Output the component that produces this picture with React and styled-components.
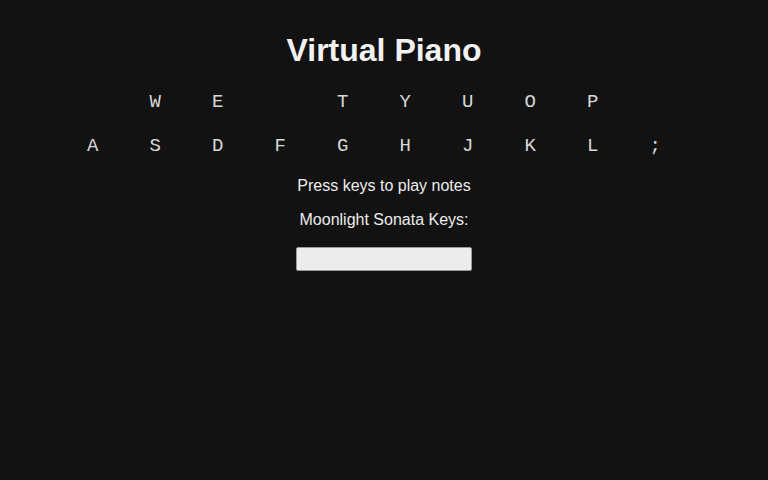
import React from "react";
import styled, { createGlobalStyle } from "styled-components";

const Global = createGlobalStyle`
  html, body {
    margin: 0;
    padding: 0;
    background: #121212;
  }
  body {
    font-family: "Liberation Sans", Arial, sans-serif;
    color: #f0f0f0;
  }
`;

const Page = styled.main`
  display: flex;
  flex-direction: column;
  align-items: center;
  padding-top: 32px;
`;

const Title = styled.h1`
  margin: 0;
  font-size: 32px;
  line-height: 37px;
  font-weight: 700;
  color: #f2f2f2;
`;

const Keyboard = styled.div`
  display: flex;
  flex-direction: column;
  margin-top: 11px;
  padding-right: 20px;
`;

const KeyRow = styled.div`
  display: flex;
  height: 44px;
  align-items: center;
`;

const Key = styled.span`
  width: 62.5px;
  text-align: center;
  font-family: "Liberation Mono", "Courier New", monospace;
  font-size: 19px;
  line-height: 44px;
  color: #d8d8d8;
  visibility: ${(p) => (p.$blank ? "hidden" : "visible")};
`;

const Note = styled.p`
  margin: ${(p) => p.$top}px 0 0;
  font-size: 16px;
  line-height: 18px;
  color: #ececec;
`;

const SequenceField = styled.input`
  margin-top: 18px;
  box-sizing: border-box;
  width: 176px;
  height: 24px;
  border: 1px solid #9a9a9a;
  border-radius: 2px;
  background: #ececec;
  padding: 2px 6px;
  font-family: "Liberation Sans", Arial, sans-serif;
  font-size: 13px;
  outline: none;
`;

// black keys; empty slots sit where no sharp exists
const topRow = ["", "W", "E", "", "T", "Y", "U", "O", "P", ""];
const bottomRow = ["A", "S", "D", "F", "G", "H", "J", "K", "L", ";"];

export default function App() {
  return (
    <>
      <Global />
      <Page>
        <Title>Virtual Piano</Title>
        <Keyboard>
          <KeyRow>
            {topRow.map((k, i) => (
              <Key key={i} $blank={!k}>
                {k || "·"}
              </Key>
            ))}
          </KeyRow>
          <KeyRow>
            {bottomRow.map((k) => (
              <Key key={k}>{k}</Key>
            ))}
          </KeyRow>
        </Keyboard>
        <Note $top={9}>Press keys to play notes</Note>
        <Note $top={16}>Moonlight Sonata Keys:</Note>
        <SequenceField type="text" />
      </Page>
    </>
  );
}
